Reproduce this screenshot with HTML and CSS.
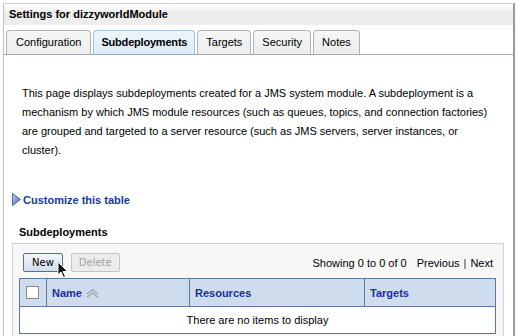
FILE: index.html
```html
<!DOCTYPE html>
<html>
<head>
<meta charset="utf-8">
<link rel="stylesheet" href="styles.css">
</head>
<body>
<div class="panel">
  <div class="panel-head">Settings for dizzyworldModule</div>
  <div class="tabs">
    <div class="tab first">Configuration</div>
    <div class="tab active">Subdeployments</div>
    <div class="tab">Targets</div>
    <div class="tab">Security</div>
    <div class="tab">Notes</div>
  </div>
  <div class="content">
    <p class="intro">This page displays subdeployments created for a JMS system module. A subdeployment is a mechanism by which JMS module resources (such as queues, topics, and connection factories) are grouped and targeted to a server resource (such as JMS servers, server instances, or cluster).</p>
    <div class="customize">
      <svg class="tri" width="9" height="13" viewBox="0 0 9 13">
        <defs><linearGradient id="g" x1="0" y1="0" x2="1" y2="1"><stop offset="0" stop-color="#c8d8f0"/><stop offset="1" stop-color="#3a5a9a"/></linearGradient></defs>
        <path d="M0.5 0.5 L8.5 6.5 L0.5 12.5 Z" fill="url(#g)" stroke="#4a6aa0" stroke-width="1"/>
      </svg>
      <a class="link">Customize this table</a>
    </div>
    <div class="sec-title">Subdeployments</div>
    <div class="tbox">
      <div class="toolbar">
        <div class="btns">
          <span class="btn new">New</span>
          <span class="btn dis">Delete</span>
          <svg class="cursor" width="12" height="18" viewBox="0 0 12 18"><path d="M1 1 L1 14 L4 11 L6.5 16.5 L8.5 15.5 L6 10.5 L10.5 10.5 Z" fill="#111" stroke="#fff" stroke-width="1"/></svg>
        </div>
        <div class="paging">Showing 0 to 0 of 0<span class="sp"></span>Previous<span class="bar">|</span>Next</div>
      </div>
      <table class="grid">
        <tr class="hdr">
          <th class="c0"><span class="cb"></span></th>
          <th class="c1">Name <svg class="sort" width="13" height="9" viewBox="0 0 13 9"><path d="M1 5 L6.5 0.8 L12 5 M1 8.3 L6.5 4 L12 8.3" fill="none" stroke="#9aa4b4" stroke-width="1.2"/></svg></th>
          <th class="c2">Resources</th>
          <th class="c3">Targets</th>
        </tr>
        <tr class="empty"><td colspan="4">There are no items to display</td></tr>
      </table>
    </div>
  </div>
</div>
</body>
</html>
```

FILE: styles.css
```css
html, body {
  margin: 0;
  padding: 0;
  background: #fff;
  height: 336px;
  overflow: hidden;
}
body {
  font-family: "Liberation Sans", Arial, sans-serif;
  font-size: 11px;
  color: #000;
}
.panel {
  margin: 3px 3px 0 3px;
  border-top: 1px solid #d4d4d4;
  border-left: 1px solid #b9c2cc;
  border-right: 2px solid #9a9a9a;
  height: 333px;
  overflow: hidden;
  box-sizing: border-box;
}
.panel-head {
  height: 21px;
  line-height: 21px;
  padding-left: 5px;
  font-weight: bold;
  font-size: 11px;
  background: linear-gradient(#ffffff 0, #f8f8f8 5px, #ececec 8px, #eeeeee 100%);
}
.tabs {
  display: flex;
  gap: 2px;
  padding: 5px 0 0 2px;
  border-bottom: 1px solid #9caabb;
}
.tab {
  height: 23px;
  line-height: 23px;
  padding: 0 8px;
  border: 1px solid #b4b4b4;
  border-bottom: none;
  border-radius: 4px 4px 0 0;
  background: linear-gradient(#f6f6f6, #ececec);
  font-size: 11px;
}
.tab.first { padding: 0 9px; }
.tab.active {
  font-weight: bold;
  padding: 0 7px;
  letter-spacing: -0.2px;
  background: linear-gradient(#eef6fd, #dcebf8);
  border-color: #a6c0da;
}
.content {
  padding: 0 9px 0 8px;
}
.intro {
  margin: 29px 0 0 10px;
  line-height: 19px;
  font-size: 11px;
  padding-right: 6px;
}
.customize {
  margin-top: 33px;
  display: flex;
  align-items: center;
  gap: 2px;
}
.tri { display: block; }
.link {
  color: #153a9a;
  font-weight: bold;
  font-size: 11px;
}
.sec-title {
  margin: 19px 0 0 7px;
  font-weight: bold;
  font-size: 11px;
  line-height: 14px;
}
.tbox {
  margin-top: 4px;
  border: 1px solid #d2d2d2;
  border-bottom: none;
  background: #f7f7f7;
  padding: 9px 7px 20px 6px;
  height: 100px;
}
.toolbar {
  display: flex;
  justify-content: space-between;
  align-items: center;
  padding-left: 4px;
}
.btns {
  display: flex;
  gap: 8px;
  position: relative;
}
.btn {
  height: 17px;
  line-height: 17px;
  padding: 0 7px;
  font-family: "DejaVu Sans", sans-serif;
  font-size: 10px;
  border-radius: 2px;
}
.btn.new {
  padding: 0 8px;
  border: 1px solid #5c6c8a;
  background: linear-gradient(#f4f7fc, #d2dcec);
  color: #000;
}
.btn.dis {
  border: 1px solid #c4c4c4;
  background: #ececec;
  color: #a0a0a0;
}
.cursor {
  position: absolute;
  left: 34px;
  top: 8px;
}
.paging {
  font-size: 11px;
  padding-right: 3px;
  color: #000;
}
.sp { display: inline-block; width: 10px; }
.bar { margin: 0 4px; color: #333; }
.grid {
  margin-top: 6px;
  width: 100%;
  border-collapse: collapse;
  border: 1px solid #5e789a;
}
.hdr th {
  background: #cedcee;
  height: 27px;
  text-align: left;
  color: #1a2f9e;
  font-size: 11px;
  font-weight: bold;
  border-right: 1px solid #5e789a;
  padding: 0 0 0 5px;
  border-bottom: 1px solid #5e789a;
}
.hdr th.c0 { width: 20px; padding: 0 0 0 6px; }
.hdr th.c1 { width: 137px; }
.hdr th.c2 { width: 169px; }
.cb {
  display: block;
  width: 11px;
  height: 11px;
  border: 1px solid #8a8a8a;
  background: #fff;
}
.sort { vertical-align: -1px; margin-left: 1px; }
.empty td {
  background: #fff;
  height: 24px;
  text-align: center;
  font-size: 11px;
}
```
